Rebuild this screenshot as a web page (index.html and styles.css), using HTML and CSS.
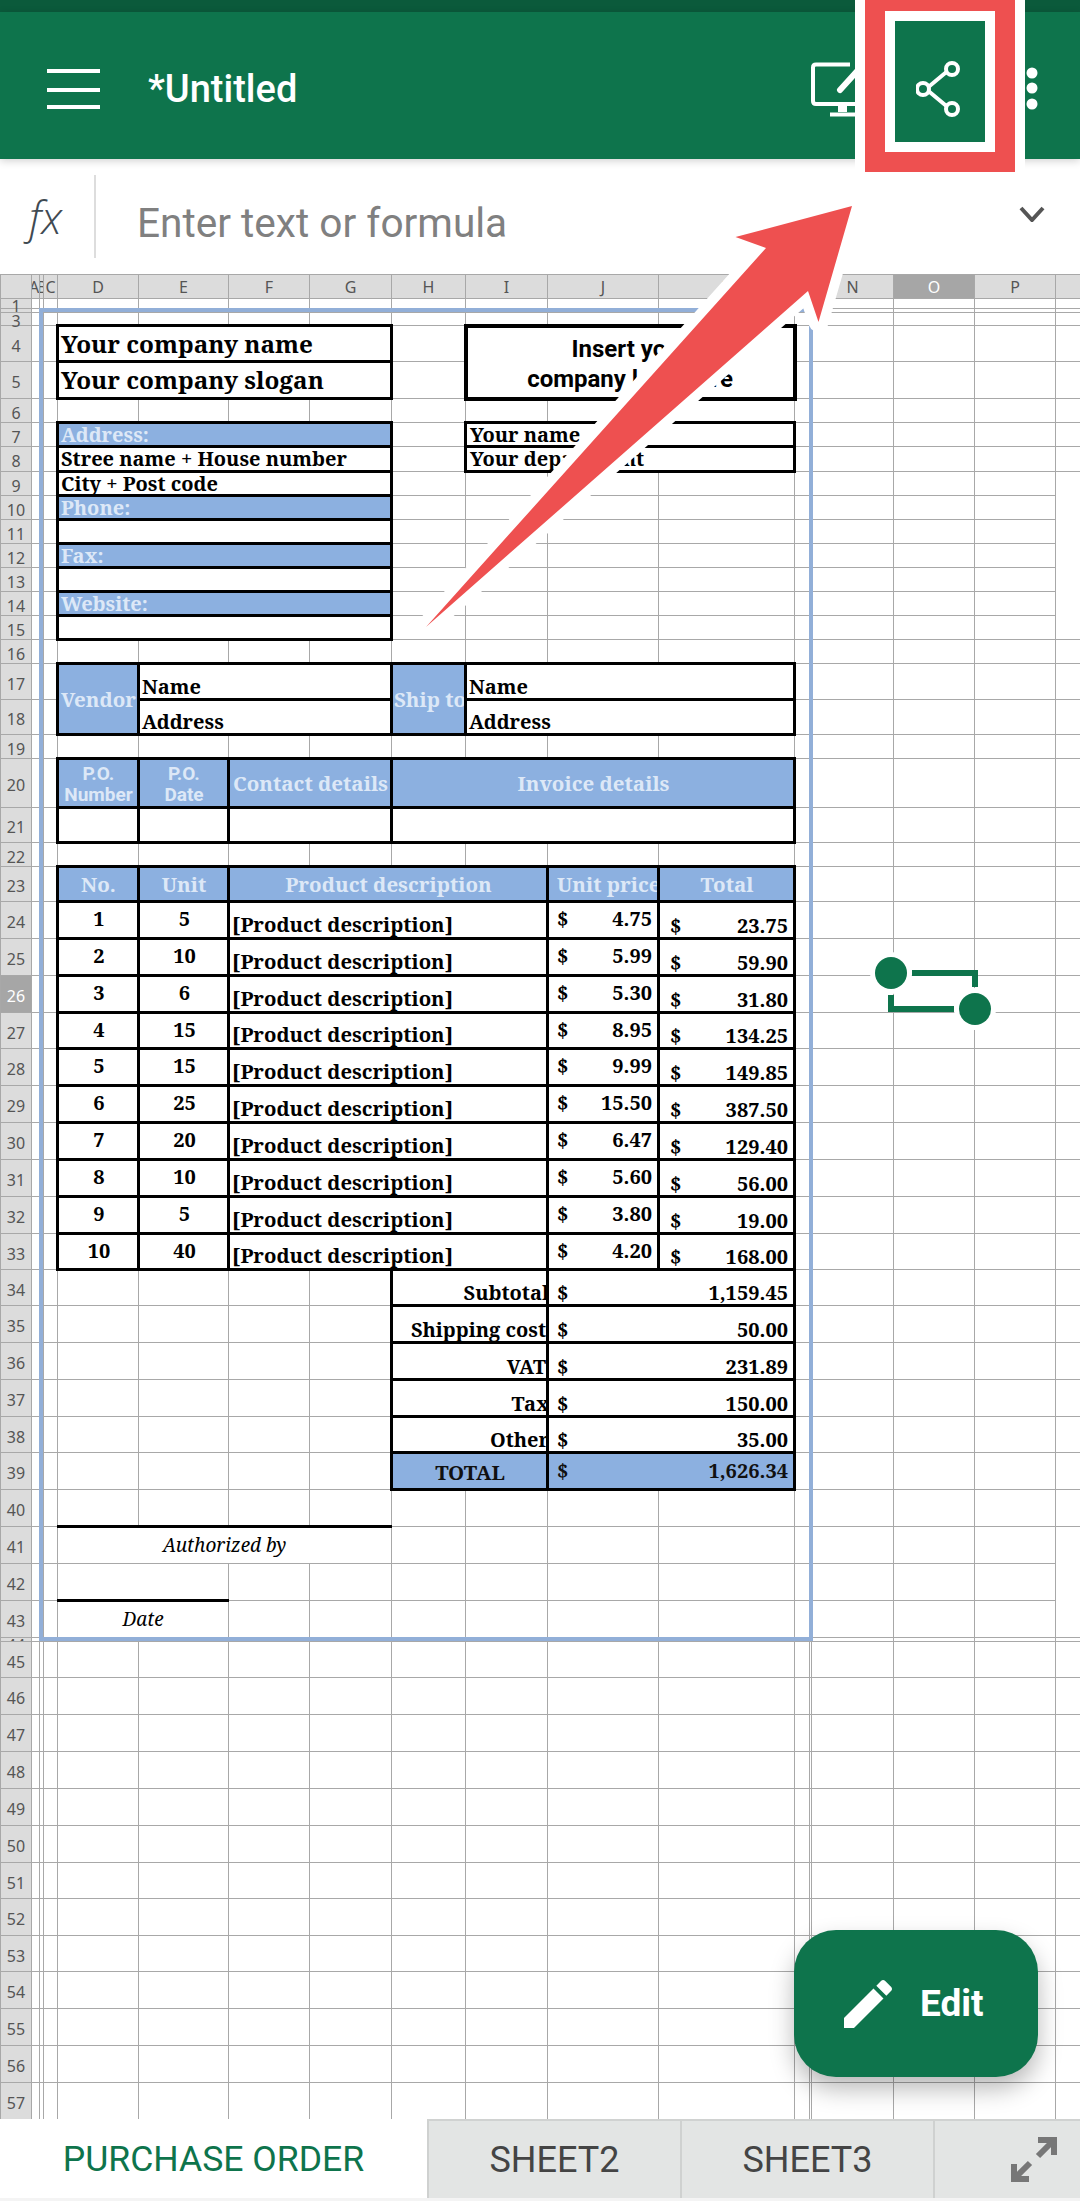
FILE: index.html
```html
<!DOCTYPE html>
<html lang="en">
<head>
<meta charset="utf-8">
<title>Untitled</title>
<link rel="stylesheet" href="styles.css">
</head>
<body>
<div class="app">
  <div class="status"></div>
  <header class="appbar">
    <svg class="menu" viewBox="0 0 53 40"><path d="M0 2H53M0 21H53M0 38H53"/></svg>
    <div class="title">*Untitled</div>
    <div class="acts">
      <svg class="present" viewBox="0 0 50 56"><path class="ln" d="M41 3.5H7Q4 3.5 4 6.5V40Q4 43 7 43H50"/><path class="ln pen" d="M31 29L50 8"/><rect class="neck" x="29" y="45" width="9" height="6"/><path class="ln" d="M21 53.5H50"/></svg>
      <svg class="share" viewBox="0 0 44 56"><path class="ln" d="M10 28L34 8M10 28L34 48"/><circle class="ring" cx="36" cy="8" r="6"/><circle class="ring" cx="7" cy="28" r="6"/><circle class="ring" cx="36" cy="48" r="6"/></svg>
      <svg class="more" viewBox="0 0 12 44"><circle cx="6" cy="6" r="5.5"/><circle cx="6" cy="21" r="5.5"/><circle cx="6" cy="37" r="5.5"/></svg>
    </div>
  </header>
  <div class="formula">
    <div class="fx">fx</div>
    <div class="input">Enter text or formula</div>
    <svg class="chev" viewBox="0 0 26 16"><path d="M2 2L13 14L24 2"/></svg>
  </div>
  <main class="sheet">
    <table class="grid">
      <colgroup><col class="c31"><col class="c8"><col class="c4"><col class="c14"><col class="c81"><col class="c90"><col class="c81"><col class="c82"><col class="c74"><col class="c82"><col class="c111"><col class="c136"><col class="c15"><col class="c2"><col class="c82"><col class="c81"><col class="c81"><col class="c25"></colgroup>
      <tr class="h24 heads"><th><th class="nar">A<th class="nar">B<th>C<th>D<th>E<th>F<th>G<th>H<th>I<th>J<th>K<th>L<th>M<th>N<th class="sel">O<th>P<th>
      <tr class="h10 low"><th>1<td><td><td><td><td><td><td><td><td><td><td><td><td><td><td><td><td>
      <tr class="h4"><th><td><td><td><td><td><td><td><td><td><td><td><td><td><td><td><td><td>
      <tr class="h13 low"><th>3<td><td><td><td><td><td><td><td><td><td><td><td><td><td><td><td><td>
      <tr class="h36"><th>4<td><td><td><td colspan="4" class="box co">Your company name<td><td colspan="3" rowspan="2" class="logo">Insert your<br>company logo here<td><td><td><td><td><td>
      <tr><th>5<td><td><td><td colspan="4" class="box co">Your company slogan<td><td><td><td><td><td><td>
      <tr class="h24"><th>6<td><td><td><td><td><td><td><td><td><td><td><td><td><td><td><td><td>
      <tr class="h24"><th>7<td><td><td><td colspan="4" class="box fill">Address:<td><td colspan="3" class="thin">Your name<td><td><td><td><td><td>
      <tr class="h25"><th>8<td><td><td><td colspan="4" class="box">Stree name + House number<td><td colspan="3" class="thin">Your department<td><td><td><td><td><td>
      <tr class="h24"><th>9<td><td><td><td colspan="4" class="box">City + Post code<td><td><td><td><td><td><td><td><td>
      <tr class="h24"><th>10<td><td><td><td colspan="4" class="box fill">Phone:<td><td><td><td><td><td><td><td><td>
      <tr class="h24"><th>11<td><td><td><td colspan="4" class="box"><td><td><td><td><td><td><td><td><td>
      <tr class="h24"><th>12<td><td><td><td colspan="4" class="box fill">Fax:<td><td><td><td><td><td><td><td><td>
      <tr class="h24"><th>13<td><td><td><td colspan="4" class="box"><td><td><td><td><td><td><td><td><td>
      <tr class="h24"><th>14<td><td><td><td colspan="4" class="box fill">Website:<td><td><td><td><td><td><td><td><td>
      <tr class="h24"><th>15<td><td><td><td colspan="4" class="box"><td><td><td><td><td><td><td><td><td>
      <tr class="h24"><th>16<td><td><td><td><td><td><td><td><td><td><td><td><td><td><td><td><td>
      <tr class="h36"><th>17<td><td><td><td rowspan="2" class="box fill mid">Vendor<td colspan="3" class="box low-text">Name<td rowspan="2" class="box fill mid">Ship to<td colspan="3" class="box low-text">Name<td><td><td><td><td><td>
      <tr class="h35"><th>18<td><td><td><td colspan="3" class="box low-text">Address<td colspan="3" class="box low-text">Address<td><td><td><td><td><td>
      <tr class="h24"><th>19<td><td><td><td><td><td><td><td><td><td><td><td><td><td><td><td><td>
      <tr class="h49"><th>20<td><td><td><td class="box fill mid small">P.O.<br>Number<td class="box fill mid small">P.O.<br>Date<td colspan="2" class="box fill mid">Contact details<td colspan="4" class="box fill mid">Invoice details<td><td><td><td><td><td>
      <tr class="h35"><th>21<td><td><td><td class="box"><td class="box"><td colspan="2" class="box"><td colspan="4" class="box"><td><td><td><td><td><td>
      <tr class="h24"><th>22<td><td><td><td><td><td><td><td><td><td><td><td><td><td><td><td><td>
      <tr class="h35"><th>23<td><td><td><td class="box fill mid">No.<td class="box fill mid">Unit<td colspan="4" class="box fill mid">Product description<td class="box fill mid nudge">Unit price<td class="box fill mid">Total<td><td><td><td><td><td>
      <tr><th>24<td><td><td><td class="box mid num">1<td class="box mid num">5<td colspan="4" class="box low-text desc">[Product description]<td class="box amt unit">$<span class="push">4.75</span><td class="box amt low-text"><span class="cur far">$</span>23.75<td><td><td><td><td><td>
      <tr><th>25<td><td><td><td class="box mid num">2<td class="box mid num">10<td colspan="4" class="box low-text desc">[Product description]<td class="box amt unit">$<span class="push">5.99</span><td class="box amt low-text"><span class="cur far">$</span>59.90<td><td><td><td><td><td>
      <tr><th class="sel">26<td><td><td><td class="box mid num">3<td class="box mid num">6<td colspan="4" class="box low-text desc">[Product description]<td class="box amt unit">$<span class="push">5.30</span><td class="box amt low-text"><span class="cur far">$</span>31.80<td><td><td><td><td><td>
      <tr class="h36"><th>27<td><td><td><td class="box mid num">4<td class="box mid num">15<td colspan="4" class="box low-text desc">[Product description]<td class="box amt unit">$<span class="push">8.95</span><td class="box amt low-text"><span class="cur far">$</span>134.25<td><td><td><td><td><td>
      <tr><th>28<td><td><td><td class="box mid num">5<td class="box mid num">15<td colspan="4" class="box low-text desc">[Product description]<td class="box amt unit">$<span class="push">9.99</span><td class="box amt low-text"><span class="cur far">$</span>149.85<td><td><td><td><td><td>
      <tr><th>29<td><td><td><td class="box mid num">6<td class="box mid num">25<td colspan="4" class="box low-text desc">[Product description]<td class="box amt unit">$<span class="push">15.50</span><td class="box amt low-text"><span class="cur far">$</span>387.50<td><td><td><td><td><td>
      <tr><th>30<td><td><td><td class="box mid num">7<td class="box mid num">20<td colspan="4" class="box low-text desc">[Product description]<td class="box amt unit">$<span class="push">6.47</span><td class="box amt low-text"><span class="cur far">$</span>129.40<td><td><td><td><td><td>
      <tr><th>31<td><td><td><td class="box mid num">8<td class="box mid num">10<td colspan="4" class="box low-text desc">[Product description]<td class="box amt unit">$<span class="push">5.60</span><td class="box amt low-text"><span class="cur far">$</span>56.00<td><td><td><td><td><td>
      <tr><th>32<td><td><td><td class="box mid num">9<td class="box mid num">5<td colspan="4" class="box low-text desc">[Product description]<td class="box amt unit">$<span class="push">3.80</span><td class="box amt low-text"><span class="cur far">$</span>19.00<td><td><td><td><td><td>
      <tr class="h36"><th>33<td><td><td><td class="box mid num">10<td class="box mid num">40<td colspan="4" class="box low-text desc">[Product description]<td class="box amt unit">$<span class="push">4.20</span><td class="box amt low-text"><span class="cur far">$</span>168.00<td><td><td><td><td><td>
      <tr class="h36"><th>34<td><td><td><td><td><td><td><td colspan="2" class="box low-text label"><span class="over">Subtotal</span><td colspan="2" class="box amt low-text"><span class="cur">$</span>1,159.45<td><td><td><td><td><td>
      <tr><th>35<td><td><td><td><td><td><td><td colspan="2" class="box low-text label">Shipping cost<td colspan="2" class="box amt low-text"><span class="cur">$</span>50.00<td><td><td><td><td><td>
      <tr><th>36<td><td><td><td><td><td><td><td colspan="2" class="box low-text label">VAT<td colspan="2" class="box amt low-text"><span class="cur">$</span>231.89<td><td><td><td><td><td>
      <tr><th>37<td><td><td><td><td><td><td><td colspan="2" class="box low-text label"><span class="over">Tax</span><td colspan="2" class="box amt low-text"><span class="cur">$</span>150.00<td><td><td><td><td><td>
      <tr class="h36"><th>38<td><td><td><td><td><td><td><td colspan="2" class="box low-text label"><span class="over">Other</span><td colspan="2" class="box amt low-text"><span class="cur">$</span>35.00<td><td><td><td><td><td>
      <tr><th>39<td><td><td><td><td><td><td><td colspan="2" class="box fill dark mid">TOTAL<td colspan="2" class="box fill dark amt"><span class="cur">$</span>1,626.34<td><td><td><td><td><td>
      <tr><th>40<td><td><td><td><td><td><td><td><td><td><td><td><td><td><td><td><td>
      <tr><th>41<td><td><td><td colspan="4" class="sign">Authorized by<td><td><td><td><td><td><td><td><td>
      <tr><th>42<td><td><td><td colspan="2"><td><td><td><td><td><td><td><td><td><td><td>
      <tr><th>43<td><td><td><td colspan="2" class="sign">Date<td><td><td><td><td><td><td><td><td><td><td>
      <tr class="h4"><th><span class="sliver">44</span><td><td><td><td><td><td><td><td><td><td><td><td><td><td><td><td><td>
      <tr class="h36"><th>45<td><td><td><td><td><td><td><td><td><td><td><td><td><td><td><td><td>
      <tr><th>46<td><td><td><td><td><td><td><td><td><td><td><td><td><td><td><td><td>
      <tr><th>47<td><td><td><td><td><td><td><td><td><td><td><td><td><td><td><td><td>
      <tr><th>48<td><td><td><td><td><td><td><td><td><td><td><td><td><td><td><td><td>
      <tr><th>49<td><td><td><td><td><td><td><td><td><td><td><td><td><td><td><td><td>
      <tr><th>50<td><td><td><td><td><td><td><td><td><td><td><td><td><td><td><td><td>
      <tr class="h36"><th>51<td><td><td><td><td><td><td><td><td><td><td><td><td><td><td><td><td>
      <tr><th>52<td><td><td><td><td><td><td><td><td><td><td><td><td><td><td><td><td>
      <tr class="h36"><th>53<td><td><td><td><td><td><td><td><td><td><td><td><td><td><td><td><td>
      <tr><th>54<td><td><td><td><td><td><td><td><td><td><td><td><td><td><td><td><td>
      <tr><th>55<td><td><td><td><td><td><td><td><td><td><td><td><td><td><td><td><td>
      <tr><th>56<td><td><td><td><td><td><td><td><td><td><td><td><td><td><td><td><td>
      <tr><th>57<td><td><td><td><td><td><td><td><td><td><td><td><td><td><td><td><td>
    </table>
    <div class="print-area"></div>
  </main>
  <nav class="tabs">
    <div class="tab active">PURCHASE ORDER</div>
    <div class="tab">SHEET2</div>
    <div class="tab">SHEET3</div>
    <div class="tab expand"><svg viewBox="0 0 46 46"><path d="M27 3H43V18M40 6L27 19"/><path d="M3 27V42H18M6 39L19 26"/></svg></div>
  </nav>
  <div class="strip"></div>

  <svg class="handles" viewBox="0 0 140 90">
    <circle class="halo" cx="31" cy="28" r="21"/><circle class="halo" cx="115" cy="64" r="21"/>
    <path d="M52 28H115V42M31 50V64H94"/>
    <circle cx="31" cy="28" r="16"/><circle cx="115" cy="64" r="16"/>
  </svg>
  <button class="fab">
    <svg viewBox="0 0 24 24"><path d="M3 17.25V21h3.75L17.81 9.94l-3.75-3.75L3 17.25zM20.71 7.04c.39-.39.39-1.02 0-1.41l-2.34-2.34c-.39-.39-1.02-.39-1.41 0l-1.83 1.83 3.75 3.75 1.83-1.83z"/></svg>
    <span>Edit</span>
  </button>
  <svg class="arrow" viewBox="0 0 1080 660"><polygon points="852,206 735.5,237 766,248 426,627 808,291 818.5,322"/></svg>
  <div class="callout"></div>
</div>
</body>
</html>
```
FILE: styles.css
```css
* { box-sizing: border-box; }
html, body { margin: 0; padding: 0; }
body { width: 1080px; height: 2201px; overflow: hidden; background: #fff; font-family: Roboto, sans-serif; }
.app { position: relative; width: 1080px; height: 2201px; display: flex; flex-direction: column; overflow: hidden; }

.status { height: 12px; flex: none; background: #0b5a3b; }
.appbar { height: 147px; flex: none; background: #0e744c; display: flex; align-items: center; padding: 6px 42px 0 47px; color: #fff; position: relative; z-index: 2; box-shadow: 0 2px 8px rgba(0,0,0,.18); }
.menu { width: 53px; height: 40px; margin-right: 48px; flex: none; }
.menu path { stroke: #fff; stroke-width: 4px; stroke-linecap: round; fill: none; }
.title { font-size: 38px; font-weight: 500; flex: 1; }
.acts { display: flex; align-items: center; }
.present { width: 50px; height: 56px; margin-right: 57px; }
.share { width: 44px; height: 56px; margin-right: 66px; }
.more { width: 12px; height: 44px; }
.more circle { fill: #fff; }
.ln { fill: none; stroke: #fff; stroke-width: 4px; }
.pen { stroke-width: 6px; stroke-linecap: round; }
.neck { fill: #fff; }
.ring { fill: #0e744c; stroke: #fff; stroke-width: 4px; }

.formula { height: 115px; flex: none; background: #fff; display: flex; align-items: center; position: relative; padding-left: 27px; }
.fx { width: 69px; height: 83px; border-right: 2px solid #ddd; padding-left: 2px; font: italic 300 44px/84px "Open Sans", sans-serif; color: #3f4a52; }
.input { flex: 1; margin-left: 41px; padding-top: 12px; font-size: 40.6px; color: #808080; }
.chev { width: 26px; height: 16px; margin: -6px 35px 0 0; }
.chev path { fill: none; stroke: #555; stroke-width: 4px; }

.sheet { flex: 1; position: relative; overflow: hidden; min-height: 0; }
.grid { table-layout: fixed; width: 1080px; border-collapse: collapse; font-family: "Noto Serif", "DejaVu Serif", serif; font-size: 20px; font-weight: 700; color: #000; }
.c31 { width: 31px; } .c8 { width: 8px; } .c4 { width: 4px; } .c14 { width: 14px; } .c81 { width: 81px; } .c90 { width: 90px; } .c82 { width: 82px; } .c74 { width: 74px; } .c111 { width: 111px; } .c136 { width: 136px; } .c15 { width: 15px; } .c2 { width: 2px; } .c25 { width: 25px; }

tr { height: 37px; }
tr.h4 { height: 4px; } tr.h10 { height: 10px; } tr.h13 { height: 13px; } tr.h24 { height: 24px; } tr.h25 { height: 25px; } tr.h35 { height: 35px; } tr.h36 { height: 36px; } tr.h49 { height: 49px; }

td, th { padding: 0; border: 1px solid #a8a8a8; line-height: 18px; white-space: nowrap; overflow: hidden; }
th { background: #dcdcdc; color: #555; font: 400 16px/0 "Noto Sans", sans-serif; text-align: center; padding-top: 4px; }
tr.heads th { line-height: 20px; padding-top: 1px; }
tr.h4 th { padding-top: 0; }
tr.low th { overflow: visible; }
th.nar { text-indent: -3px; }
th.sel { background: #a6a6a6; color: #fff; }
.sliver { display: block; height: 3px; overflow: hidden; line-height: 14px; }

.box { border: 3px solid #000; background: #fff; padding-left: 2px; }
.co { font-size: 24.3px; line-height: 24px; }
.fill { background: #8cb0e0; color: #dde8f7; }
.mid { text-align: center; padding-left: 1px; }
.fill.mid { font-size: 20.5px; }
.fill.nudge { padding-left: 8px; }
.fill.small { font: 700 19px/21px Roboto, sans-serif; padding-top: 1px; }
.num { padding-left: 2px; padding-bottom: 2px; }
.dark { color: #111; }
.fill.dark.mid { padding-top: 2px; }
.low-text { vertical-align: bottom; padding-bottom: 2px; }
.low-text.desc { font-size: 20.3px; padding-bottom: 4px; }
.thin { border: 3px solid #000; padding-left: 3px; }
.logo { border: 4px solid #000; padding-top: 3px; text-align: center; font: 700 24px/30px Roboto, sans-serif; }
.amt { text-align: right; padding-right: 5px; }
.unit { padding-bottom: 2px; text-align: left; padding-left: 8px; }
.push { float: right; }
.cur { float: left; margin-left: 6px; }
.far { margin-left: 8px; }
.label { text-align: right; padding-right: 0; }
.over { margin-right: -3px; }
.sign { border-top: 3px solid #000; font-size: 19px; font-weight: 400; font-style: italic; text-align: center; padding-bottom: 2px; }

.print-area { position: absolute; left: 39px; top: 34px; width: 774px; height: 1333px; border: 4.5px solid #92afd8; pointer-events: none; }

.tabs { height: 79px; flex: none; display: flex; background: #e3e5e4; }
.tab { width: 253px; display: flex; align-items: center; justify-content: center; font-size: 36px; color: #444; border-top: 2px solid #d0d2d1; border-left: 2px solid #cfd1d0; }
.tab.active { width: 427px; background: #fff; color: #0e744c; border: 0; font-size: 35.6px; }
.tab.expand { width: 147px; justify-content: flex-start; padding-left: 76px; }
.expand svg { width: 46px; height: 46px; }
.expand path { fill: none; stroke: #777; stroke-width: 6px; }
.strip { height: 3px; flex: none; background: #f4f4f4; }

.handles { position: absolute; left: 860px; top: 945px; width: 140px; height: 90px; }
.handles circle { fill: #0e744c; }
.handles circle.halo { fill: #fff; }
.handles path { fill: none; stroke: #0e744c; stroke-width: 6px; }

.fab { position: absolute; left: 794px; top: 1930px; width: 244px; height: 147px; border: 0; border-radius: 42px; background: #0e744c; color: #fff; box-shadow: 0 12px 24px rgba(0,0,0,.28); display: flex; align-items: center; padding: 0 0 0 42px; font: 700 37px Roboto, sans-serif; }
.fab svg { width: 64px; height: 64px; margin-right: 20px; fill: #fff; }

.arrow { position: absolute; left: 0; top: 0; width: 1080px; height: 660px; z-index: 3; }
.arrow polygon { fill: #ee5050; stroke: #fff; stroke-width: 20px; stroke-linejoin: round; paint-order: stroke; }
.callout { position: absolute; left: 865px; top: -9px; width: 150px; height: 181px; border: 20px solid #ee5050; box-shadow: 0 0 0 10px #fff, inset 0 0 0 10px #fff; z-index: 3; }
```
